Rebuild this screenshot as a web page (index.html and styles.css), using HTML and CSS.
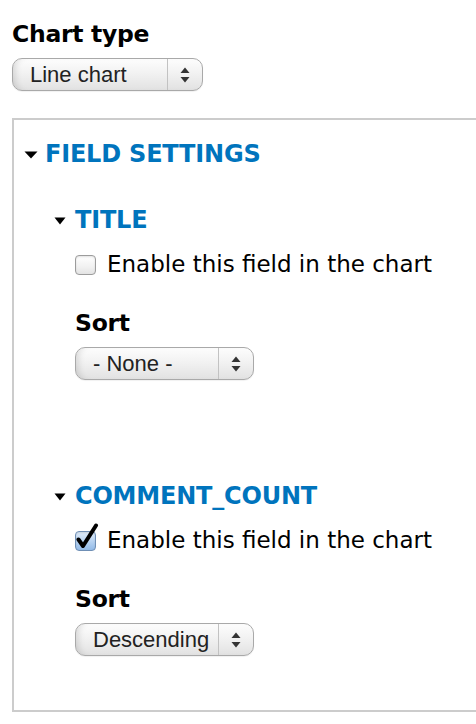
FILE: index.html
```html
<!DOCTYPE html>
<html lang="en">
<head>
<meta charset="utf-8">
<title>Chart settings</title>
<link rel="stylesheet" href="styles.css">
</head>
<body>
<div class="page">
  <div class="form-item">
    <div class="label">Chart type</div>
    <div class="select select--chart">
      <span class="select-value">Line chart</span>
      <span class="select-arrows"><svg width="10" height="16" viewBox="0 0 10 16"><polygon points="5,0.5 9.5,6 0.5,6" fill="#333"/><polygon points="0.5,10 9.5,10 5,15.5" fill="#333"/></svg></span>
    </div>
  </div>

  <div class="fieldset">
    <div class="legend">
      <svg class="tri" width="14" height="8" viewBox="0 0 14 8"><polygon points="0.5,0.5 13.5,0.5 7,7.5" fill="#000"/></svg>
      <span class="legend-text">FIELD SETTINGS</span>
    </div>

    <div class="sub">
      <div class="legend legend--sub">
        <svg class="tri tri--sub" width="12" height="8" viewBox="0 0 12 8"><polygon points="0.5,0.5 11.5,0.5 6,7.5" fill="#000"/></svg>
        <span class="legend-text">TITLE</span>
      </div>
      <div class="sub-body">
        <div class="check-row">
          <span class="checkbox"></span>
          <span class="check-label">Enable this field in the chart</span>
        </div>
        <div class="label label--sort">Sort</div>
        <div class="select select--sort">
          <span class="select-value">- None -</span>
          <span class="select-arrows"><svg width="10" height="16" viewBox="0 0 10 16"><polygon points="5,0.5 9.5,6 0.5,6" fill="#333"/><polygon points="0.5,10 9.5,10 5,15.5" fill="#333"/></svg></span>
        </div>
      </div>
    </div>

    <div class="sub sub--second">
      <div class="legend legend--sub">
        <svg class="tri tri--sub" width="12" height="8" viewBox="0 0 12 8"><polygon points="0.5,0.5 11.5,0.5 6,7.5" fill="#000"/></svg>
        <span class="legend-text">COMMENT_COUNT</span>
      </div>
      <div class="sub-body">
        <div class="check-row">
          <span class="checkbox checkbox--checked"><svg class="checkmark" width="28" height="30" viewBox="0 0 28 30"><path d="M5.5 16.5 L10 23 L23 2.5" fill="none" stroke="#000" stroke-width="4" stroke-linecap="round" stroke-linejoin="round"/></svg></span>
          <span class="check-label">Enable this field in the chart</span>
        </div>
        <div class="label label--sort">Sort</div>
        <div class="select select--sort">
          <span class="select-value">Descending</span>
          <span class="select-arrows"><svg width="10" height="16" viewBox="0 0 10 16"><polygon points="5,0.5 9.5,6 0.5,6" fill="#333"/><polygon points="0.5,10 9.5,10 5,15.5" fill="#333"/></svg></span>
        </div>
      </div>
    </div>
  </div>
</div>
</body>
</html>
```
FILE: styles.css
```css
html, body {
  margin: 0;
  padding: 0;
  background: #fff;
}

body {
  overflow: hidden;
  font-family: "DejaVu Sans", "Noto Sans", sans-serif;
  color: #000;
}

.page {
  padding: 20px 0 0 12px;
}

.label {
  font-weight: bold;
  font-size: 23.5px;
  line-height: 28px;
  letter-spacing: -0.3px;
}

.select {
  display: flex;
  align-items: stretch;
  box-sizing: border-box;
  height: 33px;
  margin-top: 10px;
  border: 1px solid #a9a9a9;
  border-radius: 10px;
  background: linear-gradient(to bottom, #fdfdfd 0%, #f2f2f2 45%, #e2e2e2 100%);
  box-shadow: inset 7px 0 7px -5px rgba(0, 0, 0, 0.14), 0 1px 1px rgba(0, 0, 0, 0.06);
  font-family: "Liberation Sans", Arial, sans-serif;
  font-size: 22px;
  color: #222;
}

.select--chart {
  width: 191px;
}

.select--sort {
  width: 179px;
}

.select-value {
  flex: 1;
  display: flex;
  align-items: center;
  padding-left: 17px;
  white-space: nowrap;
}

.select-arrows {
  width: 34px;
  display: flex;
  align-items: center;
  justify-content: center;
  border-left: 1px solid #c2c2c2;
}

.fieldset {
  box-sizing: border-box;
  width: 480px;
  margin-top: 27px;
  border: 2px solid #cccccc;
  padding: 20px 0 54px 10px;
}

.legend {
  display: flex;
  align-items: center;
  gap: 7px;
  color: #0074bd;
  font-weight: bold;
  font-size: 24px;
  line-height: 28px;
}

.legend-text {
  letter-spacing: -0.2px;
}

.legend--sub {
  gap: 9px;
}

.tri {
  display: block;
  margin-top: 2px;
}

.sub {
  padding-left: 30px;
  margin-top: 38px;
}

.sub--second {
  margin-top: 102px;
}

.sub-body {
  padding-left: 21px;
}

.check-row {
  display: flex;
  align-items: center;
  gap: 11px;
  margin-top: 16px;
  font-size: 23px;
  line-height: 28px;
}

.checkbox {
  position: relative;
  flex: none;
  box-sizing: border-box;
  width: 21px;
  height: 20px;
  margin-top: 1px;
  border: 1px solid #9c9c9c;
  border-radius: 4px;
  background: linear-gradient(to bottom, #ffffff 0%, #f1f1f1 60%, #e4e4e4 100%);
  box-shadow: inset 0 1px 2px rgba(0, 0, 0, 0.12);
}

.checkbox--checked {
  border-color: #6f8fb5;
  background: linear-gradient(to bottom, #e2eefb 0%, #b9d4f2 50%, #93bbe8 100%);
}

.checkmark {
  position: absolute;
  left: -3px;
  top: -9px;
}

.check-label {
  white-space: nowrap;
}

.label--sort {
  margin-top: 31px;
}
```
